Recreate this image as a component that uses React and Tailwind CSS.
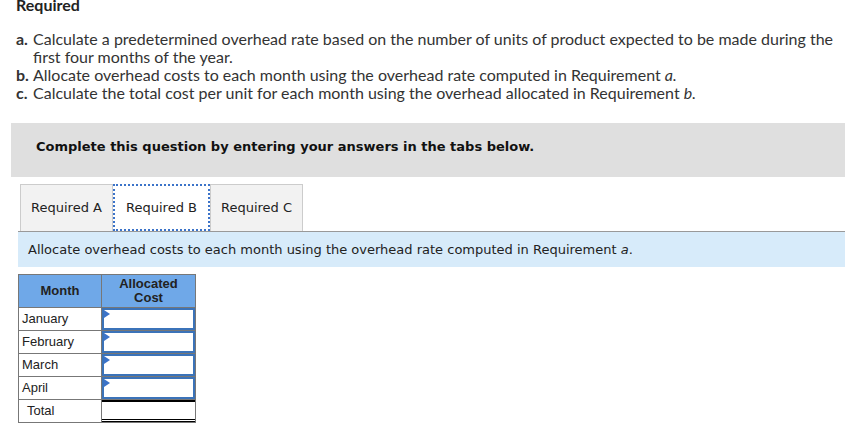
import React from "react";

const months = ["January", "February", "March", "April"];

function Tab({ label, active }) {
  return (
    <div
      className={
        active
          ? "h-[47px] w-[97px] flex items-center justify-center bg-white border-2 border-dotted border-[#3b73c9] text-[13px] text-[#222]"
          : "h-[47px] w-[93px] flex items-center justify-center bg-[#f2f2f2] border border-[#cccccc] border-b-0 text-[13px] text-[#222]"
      }
    >
      {label}
    </div>
  );
}

export default function App() {
  return (
    <div className="w-[845px] h-[431px] overflow-hidden bg-white text-[#333]">
      {/* Instructions */}
      <div className="pl-4 font-['Lato',sans-serif] text-[16px] leading-[18px]">
        <div className="font-bold -mt-[4px] text-[#222]">Required</div>
        <ol className="mt-[16px]">
          <li className="flex">
            <b className="w-[17px] shrink-0">a.</b>
            <span>
              Calculate a predetermined overhead rate based on the number of units of product expected to be made during the
              first four months of the year.
            </span>
          </li>
          <li className="flex">
            <b className="w-[17px] shrink-0">b.</b>
            <span>
              Allocate overhead costs to each month using the overhead rate computed in Requirement <i>a.</i>
            </span>
          </li>
          <li className="flex">
            <b className="w-[17px] shrink-0">c.</b>
            <span>
              Calculate the total cost per unit for each month using the overhead allocated in Requirement <i>b.</i>
            </span>
          </li>
        </ol>
      </div>

      {/* Gray prompt */}
      <div className="ml-[11px] mt-[21px] h-[54px] bg-[#dfdfdf] pl-[25px] pt-[14px] font-['DejaVu_Sans',Verdana,sans-serif] font-bold text-[13px] text-[#111]">
        Complete this question by entering your answers in the tabs below.
      </div>

      {/* Tabs */}
      <div className="ml-[20px] mt-[7px] flex font-['DejaVu_Sans',Verdana,sans-serif]">
        <Tab label="Required A" />
        <Tab label="Required B" active />
        <Tab label="Required C" />
      </div>

      <div className="ml-[18px] h-[36px] border-t border-[#999] bg-[#d7ebfa] pl-[10px] flex items-center font-['DejaVu_Sans',Verdana,sans-serif] text-[13px] text-[#222]">
        <span>
          Allocate overhead costs to each month using the overhead rate computed in Requirement <i>a</i>.
        </span>
      </div>

      {/* Table */}
      <table className="ml-[18px] mt-[7px] border-collapse font-['Liberation_Sans',Arial,sans-serif] text-[13px] text-[#222]">
        <thead>
          <tr className="bg-[#6fa8e8] h-[33px]">
            <th className="w-[83px] border border-[#777] font-bold leading-[14px]">Month</th>
            <th className="w-[94px] border border-[#777] font-bold leading-[14px]">
              Allocated
              <br />
              Cost
            </th>
          </tr>
        </thead>
        <tbody>
          {months.map((m) => (
            <tr key={m} className="h-[23px]">
              <td className="border border-[#777] pl-[3px]">{m}</td>
              <td className="border border-[#777] p-0">
                <div className="relative h-[22px] border-2 border-[#3b73b9] bg-white">
                  <span className="absolute left-0 top-0 w-0 h-0 border-y-[4px] border-y-transparent border-l-[6px] border-l-[#3b73c9]" />
                </div>
              </td>
            </tr>
          ))}
          <tr className="h-[23px]">
            <td className="border border-[#777] pl-[8px]">Total</td>
            <td className="border border-[#777] p-0">
              <div className="h-[22px] border-t-2 border-t-black border-b-[3px] border-b-black border-double bg-white" />
            </td>
          </tr>
        </tbody>
      </table>
    </div>
  );
}
